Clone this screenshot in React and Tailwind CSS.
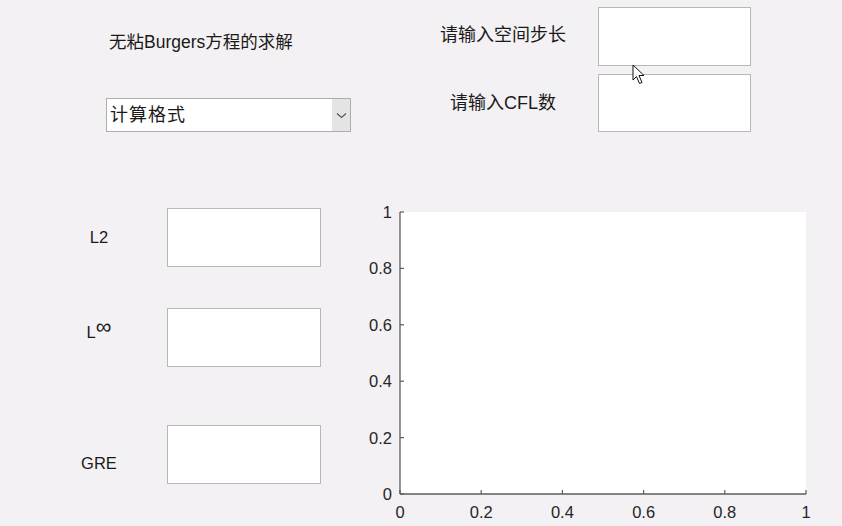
import React from "react";

const font = { fontFamily: '"Liberation Sans", "Noto Sans CJK SC", sans-serif' };

function Box({ w = "w-[154px]", h = "h-[59px]" }) {
  return <div className={`${w} ${h} bg-white border border-[#b8b8b8] shrink-0`} />;
}

function Chart() {
  const x0 = 50, x1 = 456, y0 = 304, y1 = 22;
  const yt = [0, 0.2, 0.4, 0.6, 0.8, 1];
  const col = "#262626";
  return (
    <svg width="492" height="336" className="block shrink-0">
      <rect x={x0} y={y1} width={x1 - x0} height={y0 - y1} fill="#ffffff" />
      <line x1={x0} y1={y1} x2={x0} y2={y0} stroke="#5c5c5c" strokeWidth="1.3" />
      <line x1={x0} y1={y0} x2={x1} y2={y0} stroke="#5c5c5c" strokeWidth="1.3" />
      {yt.map((v) => {
        const y = y0 - v * (y0 - y1);
        const xx = x0 + v * (x1 - x0);
        const lab = v === 0 ? "0" : v === 1 ? "1" : v.toFixed(1);
        return (
          <g key={v}>
            <line x1={x0} y1={y} x2={x0 + 4} y2={y} stroke="#5c5c5c" strokeWidth="1.2" />
            <line x1={xx} y1={y0} x2={xx} y2={y0 - 4} stroke="#5c5c5c" strokeWidth="1.2" />
            <text x={42} y={y + 6} textAnchor="end" fontSize="16.5" fill={col} style={font}>{lab}</text>
            <text x={xx} y={328} textAnchor="middle" fontSize="16.5" fill={col} style={font}>{lab}</text>
          </g>
        );
      })}
    </svg>
  );
}

export default function App() {
  return (
    <div className="w-[842px] h-[526px] bg-[#f3f1f4] relative overflow-hidden text-[#1a1a1a]" style={font}>
      {/* top section */}
      <div className="flex h-[190px]">
        <div className="ml-[106px] w-[245px] flex flex-col">
          <div className="mt-[31px] pl-[3px] text-[17.5px] leading-[22px] whitespace-nowrap">无粘Burgers方程的求解</div>
          <div className="mt-[45px] h-[34px] w-[245px] bg-white border border-[#adadad] flex items-stretch">
            <div className="flex-1 flex items-center pl-[3px] text-[18px] tracking-[1px]">计算格式</div>
            <div className="w-[18px] bg-[#e4e4e4] flex items-center justify-center">
              <svg width="11" height="7" viewBox="0 0 11 7">
                <path d="M1 1.5 L5.5 5.5 L10 1.5" fill="none" stroke="#555" strokeWidth="1.1" />
              </svg>
            </div>
          </div>
        </div>
        <div className="ml-[87px] pt-[7px] flex flex-col gap-[8px]">
          <div className="flex items-center">
            <div className="w-[130px] text-center text-[18px] leading-[24px] pb-[3px]">请输入空间步长</div>
            <div className="ml-[30px]"><Box w="w-[153px]" h="h-[59px]" /></div>
          </div>
          <div className="flex items-center">
            <div className="w-[130px] text-center text-[18px] leading-[24px]">请输入CFL数</div>
            <div className="ml-[30px]"><Box w="w-[153px]" h="h-[58px]" /></div>
          </div>
        </div>
      </div>
      {/* bottom section */}
      <div className="flex h-[336px]">
        <div className="w-[350px] flex flex-col pt-[18px]">
          <div className="flex items-center h-[59px]">
            <div className="ml-[66px] w-[66px] text-center text-[16.5px]">L2</div>
            <div className="ml-[35px]"><Box /></div>
          </div>
          <div className="flex items-center h-[59px] mt-[41px]">
            <div className="ml-[66px] w-[66px] text-center text-[16.5px] leading-[20px] pb-[11px]">
              L<span className="text-[22px] leading-[10px] align-[4px]">∞</span>
            </div>
            <div className="ml-[35px]"><Box /></div>
          </div>
          <div className="flex items-center h-[59px] mt-[58px]">
            <div className="ml-[66px] w-[66px] text-center text-[16.5px] pt-[17px]">GRE</div>
            <div className="ml-[35px]"><Box /></div>
          </div>
        </div>
        <Chart />
      </div>
      {/* mouse cursor overlay */}
      <svg className="absolute left-[632px] top-[64px]" width="14" height="22" viewBox="0 0 14 22">
        <path d="M1 1 L1 16 L4.5 12.5 L7.5 19.5 L10 18.5 L7 11.5 L12 11.5 Z" fill="#ffffff" stroke="#111" strokeWidth="1" strokeLinejoin="round" />
      </svg>
    </div>
  );
}
